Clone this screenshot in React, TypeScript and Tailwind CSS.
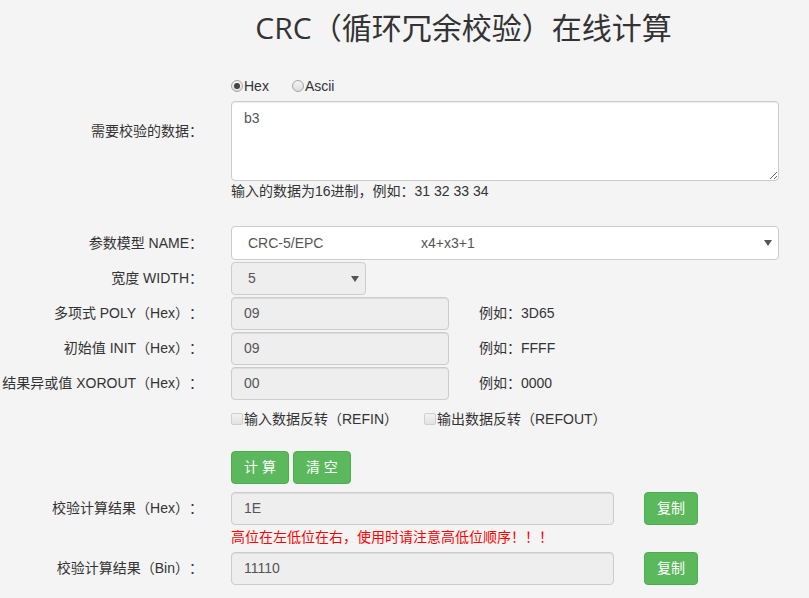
const font = "font-['Liberation_Sans','Noto_Sans_CJK_SC',sans-serif]"

function Label({ children, className = '' }: { children: React.ReactNode; className?: string }) {
  return (
    <div className={`w-[203px] shrink-0 flex justify-end whitespace-nowrap text-[14px] text-[#333] ${className}`}>
      {children}
    </div>
  )
}

function Radio({ checked, label }: { checked?: boolean; label: string }) {
  return (
    <span className="flex items-center">
      <span className="w-[12px] h-[12px] rounded-full border border-[#a5a5a5] bg-gradient-to-b from-[#f4f4f4] to-[#dcdcdc] flex items-center justify-center">
        {checked && <span className="w-[6px] h-[6px] rounded-full bg-[#444]" />}
      </span>
      <span className="ml-[1px]">{label}</span>
    </span>
  )
}

function Check({ label }: { label: string }) {
  return (
    <span className="flex items-center">
      <span className="w-[12px] h-[12px] rounded-[2px] border border-[#cfcfcf] bg-gradient-to-b from-[#f2f2f2] to-[#e2e2e2]" />
      <span className="ml-[1px]">{label}</span>
    </span>
  )
}

function Field({ value, className = '' }: { value: string; className?: string }) {
  return (
    <div
      className={`h-[33px] flex items-center pl-[12px] rounded-[4px] border border-[#ccc] bg-[#eee] text-[14px] text-[#555] shadow-[inset_0_1px_1px_rgba(0,0,0,0.075)] ${className}`}
    >
      {value}
    </div>
  )
}

function GreenButton({ children, className = '' }: { children: React.ReactNode; className?: string }) {
  return (
    <button className={`h-[33px] px-[12px] rounded-[4px] border border-[#4cae4c] bg-[#5cb85c] text-white text-[14px] ${className}`}>
      {children}
    </button>
  )
}

function Arrow() {
  return (
    <svg width="8" height="6" viewBox="0 0 8 6" className="shrink-0">
      <path d="M0 0h8L4 6z" fill="#555" />
    </svg>
  )
}

export default function App() {
  return (
    <div className={`min-h-[598px] w-[809px] bg-[#f4f4f4] text-[#333] text-[14px] overflow-hidden [text-spacing-trim:space-all] ${font}`}>
      <h1 className="pl-[118px] pt-[10px] text-center text-[30px] leading-[36px] text-[#333] font-['Open_Sans','Noto_Sans_CJK_SC',sans-serif]">
        CRC（循环冗余校验）在线计算
      </h1>

      {/* data to check */}
      <div className="flex mt-[30px]">
        <Label className="mt-[45px] leading-[20px] mr-[-2px]">需要校验的数据：</Label>
        <div className="ml-[30px] flex flex-col">
          <div className="h-[20px] flex items-center gap-[23px]">
            <Radio checked label="Hex" />
            <Radio label="Ascii" />
          </div>
          <textarea
            defaultValue="b3"
            className="mt-[5px] w-[548px] h-[80px] rounded-[4px] border border-[#ccc] bg-white px-[12px] py-[6px] text-[14px] text-[#555] outline-none shadow-[inset_0_1px_1px_rgba(0,0,0,0.075)]"
          />
          <div className="mt-[1px] leading-[18px]">输入的数据为16进制，例如：31 32 33 34</div>
        </div>
      </div>

      {/* model parameters */}
      <div className="mt-[26px] flex flex-col gap-[2px] [&>div>div:first-child]:mr-[-2px]">
        <div className="flex items-center">
          <Label>参数模型 NAME：</Label>
          <div className="ml-[30px] w-[548px] h-[34px] flex items-center pl-[16px] pr-[6px] rounded-[4px] border border-[#ccc] bg-white text-[14px] text-[#555]">
            <span className="w-[173px]">CRC-5/EPC</span>
            <span className="flex-1">x4+x3+1</span>
            <Arrow />
          </div>
        </div>
        <div className="flex items-center">
          <Label>宽度 WIDTH：</Label>
          <div className="ml-[30px] w-[135px] h-[33px] flex items-center pl-[16px] pr-[6px] rounded-[4px] border border-[#ccc] bg-[#eee] text-[14px] text-[#555]">
            <span className="flex-1">5</span>
            <Arrow />
          </div>
        </div>
        <div className="flex items-center">
          <Label>多项式 POLY（Hex）：</Label>
          <Field value="09" className="ml-[30px] w-[218px]" />
          <span className="ml-[30px]">例如：3D65</span>
        </div>
        <div className="flex items-center">
          <Label>初始值 INIT（Hex）：</Label>
          <Field value="09" className="ml-[30px] w-[218px]" />
          <span className="ml-[30px]">例如：FFFF</span>
        </div>
        <div className="flex items-center">
          <Label>结果异或值 XOROUT（Hex）：</Label>
          <Field value="00" className="ml-[30px] w-[218px]" />
          <span className="ml-[30px]">例如：0000</span>
        </div>
      </div>

      {/* reflect options */}
      <div className="ml-[231px] mt-[9px] h-[20px] flex items-center gap-[26px]">
        <Check label="输入数据反转（REFIN）" />
        <Check label="输出数据反转（REFOUT）" />
      </div>

      <div className="ml-[231px] mt-[22px] flex gap-[4px]">
        <GreenButton>计 算</GreenButton>
        <GreenButton>清 空</GreenButton>
      </div>

      {/* results */}
      <div className="mt-[8px] flex">
        <Label className="h-[33px] items-center mr-[-2px]">校验计算结果（Hex）：</Label>
        <div className="ml-[30px] flex flex-col">
          <Field value="1E" className="w-[383px]" />
          <div className="mt-[2px] leading-[20px] text-[#ff0000]">高位在左低位在右，使用时请注意高低位顺序！！！</div>
        </div>
        <GreenButton className="ml-[30px]">复制</GreenButton>
      </div>

      <div className="mt-[5px] flex items-center">
        <Label className="mr-[-2px]">校验计算结果（Bin）：</Label>
        <Field value="11110" className="ml-[30px] w-[383px]" />
        <GreenButton className="ml-[30px]">复制</GreenButton>
      </div>
    </div>
  )
}
